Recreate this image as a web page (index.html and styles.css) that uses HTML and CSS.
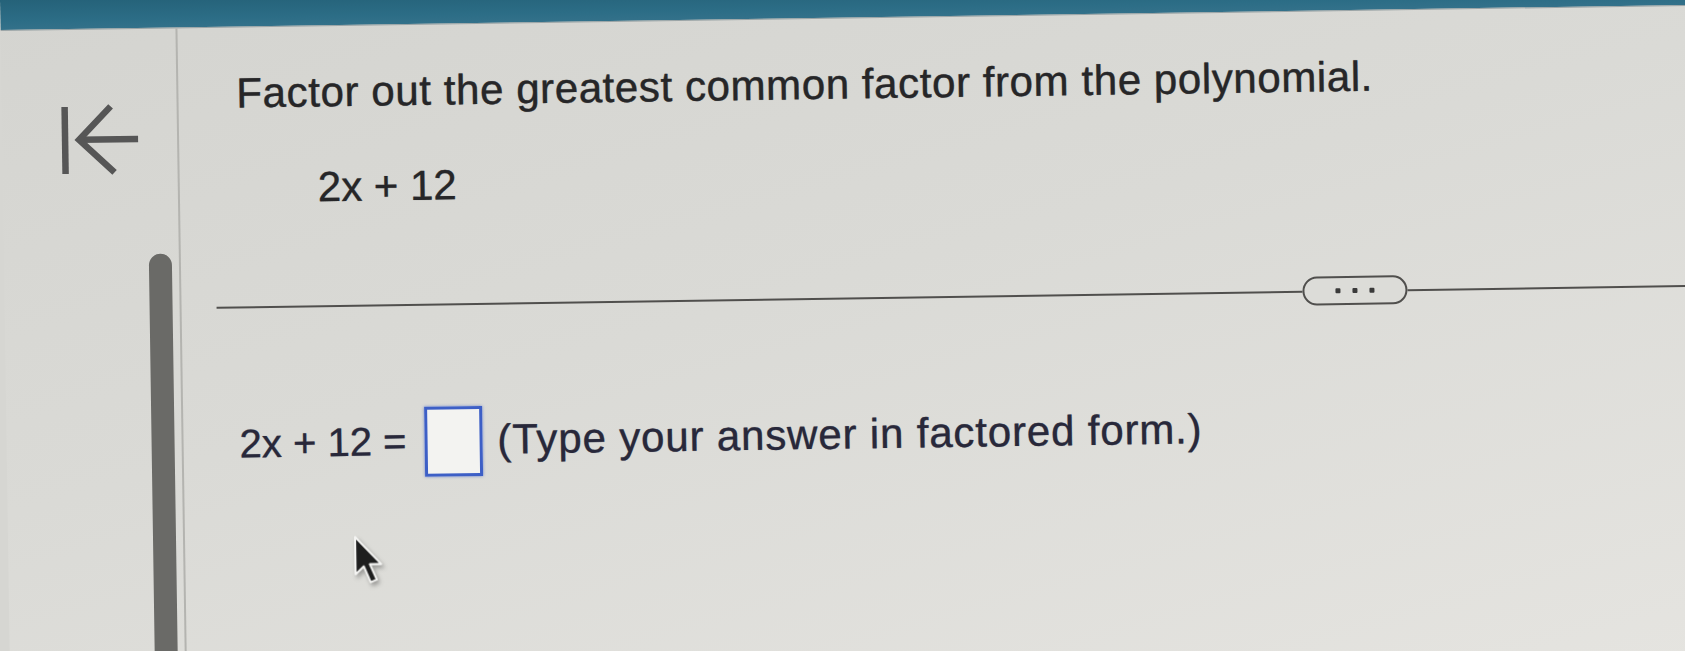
FILE: index.html
```html
<!DOCTYPE html>
<html lang="en">
<head>
<meta charset="utf-8">
<title>Factor out the greatest common factor</title>
<link rel="stylesheet" href="styles.css">
</head>
<body>
<div class="screen">
  <header class="topbar"></header>
  <div class="main">
    <aside class="sidebar">
      <button class="back-btn" aria-label="Back to start">
        <svg viewBox="0 0 80 72" width="80" height="72" aria-hidden="true">
          <path d="M5 3 V70" />
          <path d="M20 36 H78" />
          <path d="M51 3 L19 36 L54 69" />
        </svg>
      </button>
      <div class="scroll-thumb"></div>
    </aside>
    <section class="content">
      <p class="prompt">Factor out the greatest common factor from the polynomial.</p>
      <p class="expr">2x + 12</p>
      <div class="divider">
        <span class="line line-left"></span>
        <button class="more" aria-label="More"><i></i><i></i><i></i></button>
        <span class="line line-right"></span>
      </div>
      <p class="answer">2x + 12 =<span class="answer-box"></span><span class="hint">(Type your answer in factored form.)</span></p>
      <svg class="cursor" viewBox="0 0 32 50" width="33" height="52" aria-hidden="true">
        <path d="M2 2 L2 38 L10 30.5 L16.5 46 L22.5 43.5 L16 28.5 L27 28.5 Z" />
      </svg>
    </section>
  </div>
</div>
</body>
</html>
```

FILE: styles.css
```css
* { box-sizing: border-box; }

html, body {
  margin: 0;
  padding: 0;
  width: 100%;
  height: 100%;
  overflow: hidden;
  background: #d6d6d2;
}

.screen {
  width: 1740px;
  height: 680px;
  transform: rotate(-0.85deg);
  transform-origin: 0 0;
  background: linear-gradient(165deg, #d4d4d0 0%, #dadad6 45%, #e5e4e0 100%);
  font-family: "Liberation Sans", Arial, sans-serif;
  color: #262628;
  display: flex;
  flex-direction: column;
  overflow: hidden;
}

.topbar {
  height: 31px;
  flex: none;
  background: linear-gradient(180deg, #256279 0%, #2c6d86 70%, #33718a 100%);
  border-bottom: 1px solid #9aa4a6;
}

.main {
  flex: 1;
  display: flex;
}

.sidebar {
  width: 177px;
  flex: none;
  border-right: 2px solid #b4b4b0;
  display: flex;
  flex-direction: column;
  align-items: flex-start;
}

.back-btn {
  margin: 74px 0 0 58px;
  padding: 0;
  border: 0;
  background: none;
  width: 80px;
  height: 72px;
}

.back-btn svg {
  display: block;
  fill: none;
  stroke: #565656;
  stroke-width: 6.5;
  stroke-linecap: butt;
  stroke-linejoin: miter;
}

.scroll-thumb {
  margin: 79px 0 0 145px;
  width: 23px;
  flex: 1;
  background: #6a6a67;
  border-radius: 12px 12px 0 0;
}

.content {
  flex: 1;
  position: relative;
  padding: 42px 0 0 35px;
}

.prompt {
  margin: 0 0 0 23px;
  font-size: 42px;
  line-height: 48px;
  letter-spacing: 0.6px;
  white-space: nowrap;
  -webkit-text-stroke: 0.35px #262628;
  text-shadow: 0 0 1px rgba(30, 30, 30, 0.35);
}

.expr {
  margin: 47px 0 0 103px;
  font-size: 42px;
  line-height: 48px;
  white-space: nowrap;
  -webkit-text-stroke: 0.3px #262628;
  text-shadow: 0 0 1px rgba(30, 30, 30, 0.35);
}

.divider {
  margin-top: 80px;
  display: flex;
  align-items: center;
  height: 29px;
}

.line {
  height: 2px;
  background: #504f4d;
}

.line-left { width: 1086px; flex: none; }
.line-right { flex: 1; }

.more {
  width: 105px;
  height: 29px;
  flex: none;
  padding: 0;
  border: 2.5px solid #504f4d;
  border-radius: 15px;
  background: #dcdcd8;
  display: flex;
  align-items: center;
  justify-content: center;
  gap: 12px;
}

.more i {
  width: 5px;
  height: 5px;
  background: #3a3a3a;
  border-radius: 1px;
}

.answer {
  margin: 88px 0 0 21px;
  font-size: 40px;
  line-height: 48px;
  white-space: nowrap;
  color: #28283a;
  -webkit-text-stroke: 0.3px #28283a;
  text-shadow: 0 0 1px rgba(30, 30, 50, 0.35);
}

.hint {
  font-size: 42px;
  letter-spacing: 0.85px;
}

.answer-box {
  display: inline-block;
  width: 58px;
  height: 70px;
  margin: 0 15px 0 18px;
  vertical-align: -22px;
  background: #f3f3f1;
  border: 3px solid #3d5fc6;
  box-shadow: 0 0 3px rgba(61, 95, 198, 0.7);
}

.cursor {
  position: absolute;
  left: 168px;
  top: 509px;
  overflow: visible;
  filter: drop-shadow(2px 3px 2px rgba(0, 0, 0, 0.3));
}

.cursor path {
  fill: #1e1e1e;
  stroke: #f4f4f2;
  stroke-width: 2;
  stroke-linejoin: round;
}
```
